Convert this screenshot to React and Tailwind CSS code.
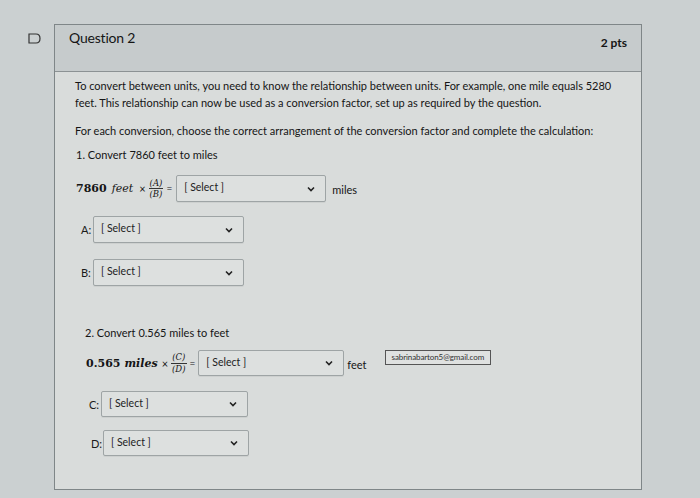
import React from 'react';

function Chevron() {
  return (
    <svg width="8" height="6" viewBox="0 0 8 6" className="shrink-0">
      <path d="M1 1.5 L4 4.5 L7 1.5" fill="none" stroke="#222" strokeWidth="1.6" />
    </svg>
  );
}

function Select({ w = 'w-[150px]', h = 'h-[27px]' }) {
  return (
    <div className={`${w} ${h} flex items-center justify-between border border-[#9ea4a5] bg-[#dde0df] rounded-[2px] pl-[7px] pr-[10px] shadow-[0_1px_0_rgba(0,0,0,0.05)]`}>
      <span className="text-[10.5px] text-[#222] -mt-[2px]">[ Select ]</span>
      <Chevron />
    </div>
  );
}

function Frac({ top, bottom }) {
  return (
    <span className="inline-flex flex-col items-center leading-none font-['DejaVu_Serif',serif] italic text-[8.5px] mx-[3px]">
      <span className="pb-[1px]">{top}</span>
      <span className="border-t border-[#333] pt-[1px] px-[1px]">{bottom}</span>
    </span>
  );
}

function Label({ children }) {
  return <span className="w-[12px] text-[11px] text-[#1a1a1a]">{children}</span>;
}

export default function App() {
  return (
    <div className="w-[700px] h-[498px] overflow-hidden bg-[#cbd0d1] font-['Lato',sans-serif] text-[#151515] pt-[24px]">
      <div className="flex">
        <div className="w-[54px] pl-[28px] pt-[9px]">
          <svg width="13" height="11" viewBox="0 0 13 11">
            <path d="M1 1 H8 Q12 1 12 5.5 Q12 10 8 10 H1 Z" fill="none" stroke="#333" strokeWidth="1.2" />
          </svg>
        </div>
        <div className="w-[588px] h-[466px] border border-[#7f8688] bg-[#d9dcdb] flex flex-col">
          <div className="h-[47px] shrink-0 bg-[#c6cbcc] border-b border-[#8c9294] flex justify-between px-[14px]">
            <span className="text-[14px] pt-[2px] tracking-[-0.2px]">Question 2</span>
            <span className="text-[12px] pt-[9px] font-bold">2 pts</span>
          </div>
          <div className="flex flex-col pl-[20px] pt-[5px] text-[11px] leading-[17px]">
            <p className="w-[545px]">
              To convert between units, you need to know the relationship between units. For example, one mile equals 5280 feet. This relationship can now be used as a conversion factor, set up as required by the question.
            </p>
            <p className="mt-[11px]">For each conversion, choose the correct arrangement of the conversion factor and complete the calculation:</p>
            <p className="mt-[7px] ml-[1px]">1. Convert 7860 feet to miles</p>

            <div className="flex items-center mt-[12px] ml-[1px]">
              <span className="font-['DejaVu_Serif',serif] text-[11px] font-bold">7860 </span>
              <span className="font-['DejaVu_Serif',serif] italic text-[11px] ml-[5px]">feet</span>
              <span className="text-[11px] ml-[6px]">×</span>
              <Frac top="(A)" bottom="(B)" />
              <span className="text-[10px] mr-[4px]">=</span>
              <Select />
              <span className="ml-[6px] text-[11px] mt-[2px]">miles</span>
            </div>

            <div className="flex items-center mt-[14px] ml-[6px]">
              <Label>A:</Label>
              <Select w="w-[151px]" />
            </div>
            <div className="flex items-center mt-[16px] ml-[6px]">
              <Label>B:</Label>
              <Select w="w-[151px]" />
            </div>

            <p className="mt-[38px] ml-[10px]">2. Convert 0.565 miles to feet</p>

            <div className="flex items-center mt-[9px] ml-[11px]">
              <span className="font-['DejaVu_Serif',serif] text-[11px] font-bold">0.565</span>
              <span className="font-['DejaVu_Serif',serif] italic font-bold text-[11px] ml-[4px]">miles</span>
              <span className="text-[11px] ml-[4px]">×</span>
              <Frac top="(C)" bottom="(D)" />
              <span className="text-[10px] mr-[3px]">=</span>
              <Select w="w-[146px]" h="h-[26px]" />
              <span className="ml-[3px] text-[11px] mt-[3px]">feet</span>
              <div className="ml-[18px] self-start border border-[#555] bg-[#dfe1e0] px-[6px] h-[15px] flex items-center">
                <span className="text-[8px] tracking-[-0.1px] text-[#333]">sabrinabarton5@gmail.com</span>
              </div>
            </div>

            <div className="flex items-center mt-[15px] ml-[14px]">
              <Label>C:</Label>
              <Select w="w-[147px]" h="h-[26px]" />
            </div>
            <div className="flex items-center mt-[13px] ml-[16px]">
              <Label>D:</Label>
              <Select w="w-[146px]" h="h-[26px]" />
            </div>
          </div>
        </div>
      </div>
    </div>
  );
}
